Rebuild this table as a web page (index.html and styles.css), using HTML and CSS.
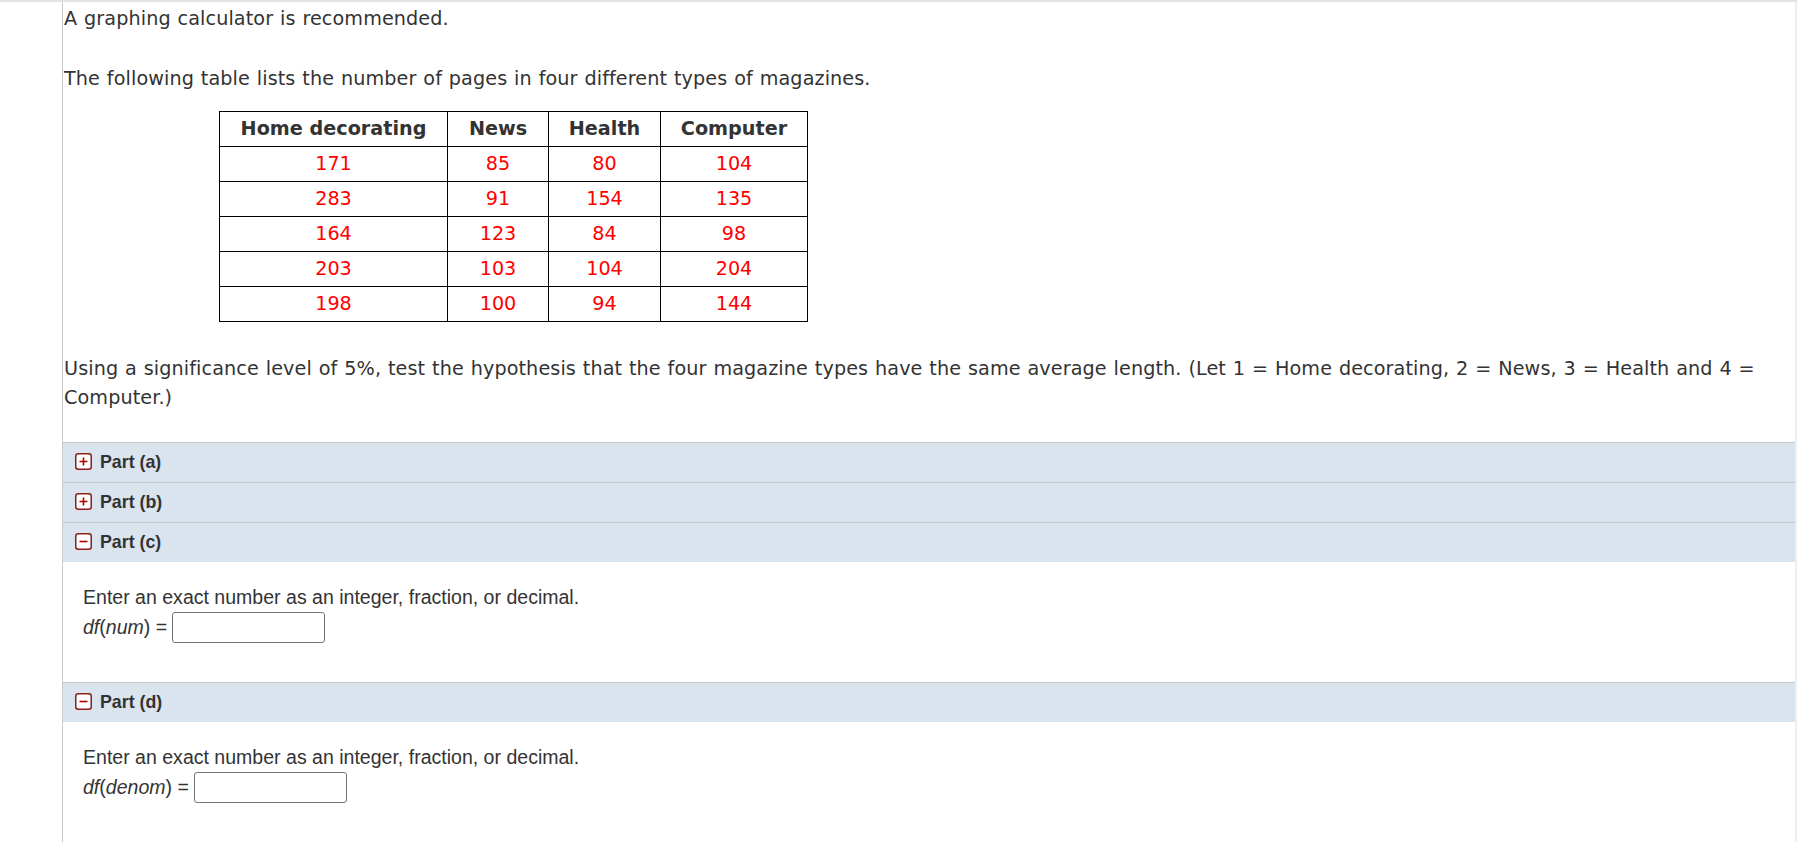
FILE: index.html
```html
<!DOCTYPE html>
<html lang="en">
<head>
<meta charset="utf-8">
<title>Magazine pages</title>
<link rel="stylesheet" href="styles.css">
</head>
<body>
<div class="page">
  <div class="gutter"></div>
  <main class="main">
    <div class="intro">
      <p class="line">A graphing calculator is recommended.</p>
      <p class="line spaced">The following table lists the number of pages in four different types of magazines.</p>
      <table class="data">
        <colgroup>
          <col class="c1"><col class="c2"><col class="c3"><col class="c4">
        </colgroup>
        <thead>
          <tr><th>Home decorating</th><th>News</th><th>Health</th><th>Computer</th></tr>
        </thead>
        <tbody>
          <tr><td>171</td><td>85</td><td>80</td><td>104</td></tr>
          <tr><td>283</td><td>91</td><td>154</td><td>135</td></tr>
          <tr><td>164</td><td>123</td><td>84</td><td>98</td></tr>
          <tr><td>203</td><td>103</td><td>104</td><td>204</td></tr>
          <tr><td>198</td><td>100</td><td>94</td><td>144</td></tr>
        </tbody>
      </table>
      <p class="question">Using a significance level of 5%, test the hypothesis that the four magazine types have the same average length. (Let 1 = Home decorating, 2 = News, 3 = Health and 4 = Computer.)</p>
    </div>

    <section class="part">
      <div class="part-head">
        <svg class="toggle" width="17" height="17" viewBox="0 0 17 17"><rect x="0.75" y="0.75" width="15.5" height="15.5" rx="2.5" fill="#fff" stroke="#8e1c1c" stroke-width="1.5"/><path d="M4.5 8.5h8M8.5 4.5v8" stroke="#b00000" stroke-width="1.6" fill="none"/></svg>
        <span>Part (a)</span>
      </div>
    </section>

    <section class="part">
      <div class="part-head">
        <svg class="toggle" width="17" height="17" viewBox="0 0 17 17"><rect x="0.75" y="0.75" width="15.5" height="15.5" rx="2.5" fill="#fff" stroke="#8e1c1c" stroke-width="1.5"/><path d="M4.5 8.5h8M8.5 4.5v8" stroke="#b00000" stroke-width="1.6" fill="none"/></svg>
        <span>Part (b)</span>
      </div>
    </section>

    <section class="part">
      <div class="part-head">
        <svg class="toggle" width="17" height="17" viewBox="0 0 17 17"><rect x="0.75" y="0.75" width="15.5" height="15.5" rx="2.5" fill="#fff" stroke="#8e1c1c" stroke-width="1.5"/><path d="M4.5 8.5h8" stroke="#b00000" stroke-width="1.6" fill="none"/></svg>
        <span>Part (c)</span>
      </div>
      <div class="part-body">
        <div class="hint">Enter an exact number as an integer, fraction, or decimal.</div>
        <div class="answer">
          <span class="label"><i>df</i>(<i>num</i>) =</span>
          <input class="field" type="text" aria-label="df(num)">
        </div>
      </div>
    </section>

    <section class="part">
      <div class="part-head">
        <svg class="toggle" width="17" height="17" viewBox="0 0 17 17"><rect x="0.75" y="0.75" width="15.5" height="15.5" rx="2.5" fill="#fff" stroke="#8e1c1c" stroke-width="1.5"/><path d="M4.5 8.5h8" stroke="#b00000" stroke-width="1.6" fill="none"/></svg>
        <span>Part (d)</span>
      </div>
      <div class="part-body">
        <div class="hint">Enter an exact number as an integer, fraction, or decimal.</div>
        <div class="answer">
          <span class="label"><i>df</i>(<i>denom</i>) =</span>
          <input class="field" type="text" aria-label="df(denom)">
        </div>
      </div>
    </section>
  </main>
  <div class="edge"></div>
</div>
</body>
</html>
```

FILE: styles.css
```css
html, body {
  margin: 0;
  padding: 0;
  background: #fff;
  overflow: hidden;
}

.page {
  display: flex;
  height: 842px;
  box-sizing: border-box;
  border-top: 2px solid #e3e3e3;
}

.gutter {
  width: 62px;
  flex: none;
}

.main {
  flex: 1;
  min-width: 0;
  border-left: 1px solid #c9c9c9;
}

.edge {
  width: 2px;
  flex: none;
  background: #efefef;
}

.intro {
  padding: 2px 0 0 1px;
  font-family: "DejaVu Sans", Verdana, sans-serif;
  font-size: 19.2px;
  line-height: 29.6px;
  color: #333;
}

.line,
.question {
  word-spacing: 0.65px;
  letter-spacing: 0.1px;
}

.line {
  margin: 0;
}

.spaced {
  margin-top: 30.2px;
}

.data {
  margin: 18px 0 0 155px;
  border-collapse: collapse;
  table-layout: fixed;
  width: 588px;
}

.c1 { width: 228px; }
.c2 { width: 101px; }
.c3 { width: 112px; }
.c4 { width: 147px; }

.data th,
.data td {
  border: 1px solid #000;
  padding: 0;
  height: 33.9px;
  text-align: center;
  vertical-align: middle;
  line-height: 22px;
}

.data th {
  font-weight: bold;
  color: #333;
}

.data td {
  color: #ff0000;
}

.question {
  margin: 31.8px 0 28.8px 0;
}

.part-head {
  display: flex;
  align-items: center;
  gap: 8px;
  height: 39px;
  padding-left: 12px;
  background: #d9e4ee;
  border-top: 1px solid #c6c9cc;
  font-family: "Liberation Sans", Arial, sans-serif;
  font-weight: bold;
  font-size: 17.8px;
  color: #333;
}

.toggle {
  display: block;
  flex: none;
  margin-top: -1px;
}

.part-body {
  padding: 24px 0 39px 20px;
  font-family: "Liberation Sans", Arial, sans-serif;
  font-size: 19.55px;
  line-height: 22px;
  color: #333;
}

.answer {
  display: flex;
  align-items: center;
  margin-top: 4px;
}

.field {
  margin: 0 0 0 5px;
  width: 153px;
  height: 31px;
  box-sizing: border-box;
  border: 1px solid #767676;
  border-radius: 3px;
  background: #fff;
  padding: 0 4px;
  font: inherit;
}
```
